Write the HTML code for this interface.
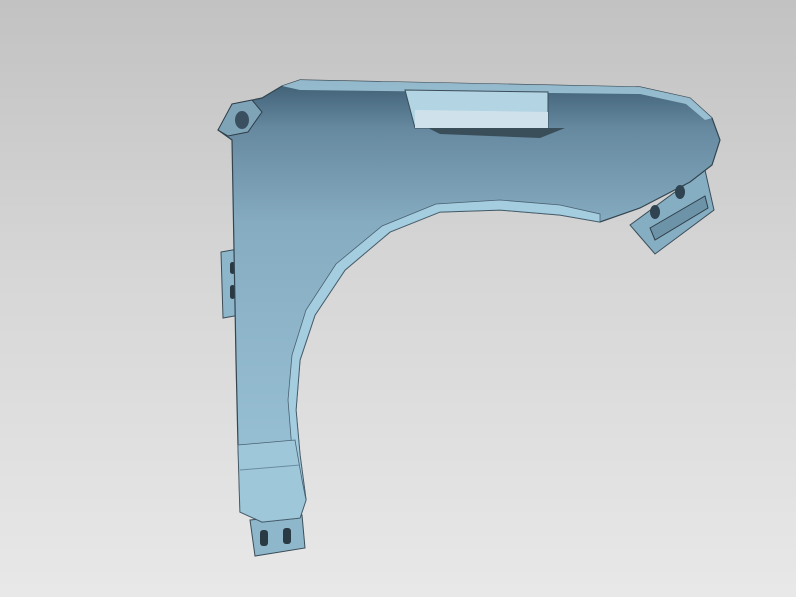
<!DOCTYPE html>
<html><head><meta charset="utf-8"><style>
html,body{margin:0;padding:0;width:796px;height:597px;overflow:hidden}
body{background:linear-gradient(180deg,#c2c2c2 0%,#d6d6d6 45%,#e8e8e8 100%)}
</style></head><body>
<svg width="796" height="597" viewBox="0 0 796 597" xmlns="http://www.w3.org/2000/svg">
<defs>
<linearGradient id="g" x1="0" y1="0" x2="0" y2="1" gradientUnits="userSpaceOnUse" gradientTransform="" >
<stop offset="0" stop-color="#3f6074"/>
<stop offset="0.12" stop-color="#6a8ea2"/>
<stop offset="0.3" stop-color="#86adc2"/>
<stop offset="1" stop-color="#9cc6da"/>
</linearGradient>
<linearGradient id="gv" x1="0" y1="80" x2="0" y2="560" gradientUnits="userSpaceOnUse">
<stop offset="0" stop-color="#3d5d72"/>
<stop offset="0.1" stop-color="#6689a0"/>
<stop offset="0.3" stop-color="#86acc1"/>
<stop offset="1" stop-color="#9fc8dc"/>
</linearGradient>
</defs>
<!-- tabs -->
<path d="M221,252 L244,248 L246,314 L223,318 Z" fill="#8eb6ca" stroke="#3b4d58" stroke-width="1"/>
<rect x="230" y="262" width="5" height="12" rx="2.5" fill="#2a3a44"/>
<rect x="230" y="285" width="5" height="14" rx="2.5" fill="#2a3a44"/>
<path d="M630,225 L705,170 L714,210 L655,254 Z" fill="#86aec2" stroke="#3b4d58"/>
<path d="M650,228 L705,196 L708,208 L655,240 Z" fill="#6d93a8" stroke="#2f3f48"/>
<path d="M250,520 L302,515 L305,548 L255,556 Z" fill="#8fb7cb" stroke="#3b4d58"/>
<!-- main body -->
<path d="M218,130 L238,103 L262,98 L282,86 L300,80 L640,87 L690,98 L712,118 L720,140 L712,165 L690,182 L640,208 L600,222 L560,215 L500,210 L440,212 L390,232 L345,270 L315,315 L300,360 L296,410 L300,455 L306,500 L300,518 L262,522 L240,512 L238,445 L236,360 L234,250 L232,140 Z" fill="url(#gv)" stroke="#33454f" stroke-width="1.2"/>
<!-- inner arch flange -->
<path d="M600,222 L560,215 L500,210 L440,212 L390,232 L345,270 L315,315 L300,360 L296,410 L300,455 L306,500 L300,518 L292,512 L292,450 L288,400 L292,355 L306,310 L336,264 L382,226 L436,204 L500,200 L560,205 L600,214 Z" fill="#a4cde0" stroke="#4a6170" stroke-width="0.8"/>
<!-- top flange -->
<path d="M282,86 L300,80 L640,87 L690,98 L712,118 L705,120 L686,104 L640,94 L300,90 Z" fill="#a9d0e2" opacity="0.8"/>
<!-- center bracket -->
<path d="M405,90 L548,92 L548,128 L415,128 Z" fill="#b3d4e3" stroke="#3b4d58"/>
<path d="M415,110 L548,112 L548,128 L415,128 Z" fill="#cfe2ec"/>
<path d="M428,128 L565,128 L540,138 L440,134 Z" fill="#3a4e5a"/>
<!-- top-left tab -->
<path d="M218,130 L232,104 L252,100 L262,112 L248,132 L228,136 Z" fill="#7fa4b8" stroke="#2e3e48"/>
<ellipse cx="242" cy="120" rx="7" ry="9" fill="#3a5060"/>
<!-- lower bend -->
<path d="M238,445 L295,440 L302,480 L306,500 L300,518 L262,522 L240,512 Z" fill="#9ec7da" stroke="#4a6170" stroke-width="0.8"/>
<path d="M240,470 L300,465" stroke="#6a8ca0" stroke-width="1"/>
<rect x="260" y="530" width="8" height="16" rx="3" fill="#2a3a44"/>
<rect x="283" y="528" width="8" height="16" rx="3" fill="#2a3a44"/>
<ellipse cx="655" cy="212" rx="5" ry="7" fill="#2f4350"/>
<ellipse cx="680" cy="192" rx="5" ry="7" fill="#2f4350"/>
</svg>
</body></html>
